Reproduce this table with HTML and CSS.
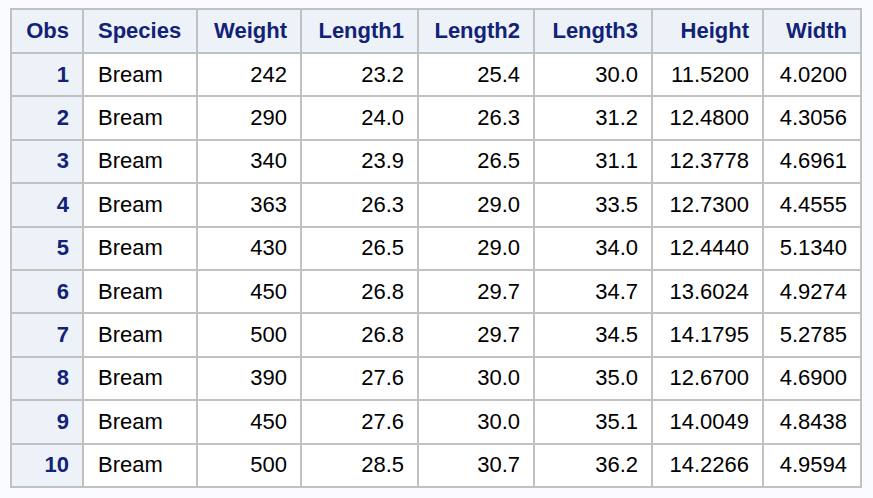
FILE: index.html
```html
<!DOCTYPE html>
<html>
<head>
<meta charset="utf-8">
<link rel="stylesheet" href="styles.css">
</head>
<body>
<table class="tbl">
<colgroup>
<col class="c-obs"><col class="c-sp"><col class="c-w"><col class="c-l1"><col class="c-l2"><col class="c-l3"><col class="c-h"><col class="c-wd">
</colgroup>
<thead>
<tr><th>Obs</th><th class="left">Species</th><th>Weight</th><th>Length1</th><th>Length2</th><th>Length3</th><th>Height</th><th>Width</th></tr>
</thead>
<tbody>
<tr><th>1</th><td class="left">Bream</td><td>242</td><td>23.2</td><td>25.4</td><td>30.0</td><td>11.5200</td><td>4.0200</td></tr>
<tr><th>2</th><td class="left">Bream</td><td>290</td><td>24.0</td><td>26.3</td><td>31.2</td><td>12.4800</td><td>4.3056</td></tr>
<tr><th>3</th><td class="left">Bream</td><td>340</td><td>23.9</td><td>26.5</td><td>31.1</td><td>12.3778</td><td>4.6961</td></tr>
<tr><th>4</th><td class="left">Bream</td><td>363</td><td>26.3</td><td>29.0</td><td>33.5</td><td>12.7300</td><td>4.4555</td></tr>
<tr><th>5</th><td class="left">Bream</td><td>430</td><td>26.5</td><td>29.0</td><td>34.0</td><td>12.4440</td><td>5.1340</td></tr>
<tr><th>6</th><td class="left">Bream</td><td>450</td><td>26.8</td><td>29.7</td><td>34.7</td><td>13.6024</td><td>4.9274</td></tr>
<tr><th>7</th><td class="left">Bream</td><td>500</td><td>26.8</td><td>29.7</td><td>34.5</td><td>14.1795</td><td>5.2785</td></tr>
<tr><th>8</th><td class="left">Bream</td><td>390</td><td>27.6</td><td>30.0</td><td>35.0</td><td>12.6700</td><td>4.6900</td></tr>
<tr><th>9</th><td class="left">Bream</td><td>450</td><td>27.6</td><td>30.0</td><td>35.1</td><td>14.0049</td><td>4.8438</td></tr>
<tr><th>10</th><td class="left">Bream</td><td>500</td><td>28.5</td><td>30.7</td><td>36.2</td><td>14.2266</td><td>4.9594</td></tr>
</tbody>
</table>
</body>
</html>
```
FILE: styles.css
```css
html, body {
  margin: 0;
  background: #fafbfe;
}
body {
  padding: 8px 0 0 10px;
}
.tbl {
  border-collapse: collapse;
  table-layout: fixed;
  width: 850px;
  font-family: "Liberation Sans", Arial, sans-serif;
  font-size: 22px;
  color: #000;
  background: #fff;
}
.c-obs { width: 72px; }
.c-sp { width: 114px; }
.c-w { width: 104px; }
.c-l1 { width: 117px; }
.c-l2 { width: 116px; }
.c-l3 { width: 118px; }
.c-h { width: 111px; }
.c-wd { width: 98px; }
.tbl th, .tbl td {
  border: 2px solid #c1c1c1;
  padding: 0 13px 0 14px;
  text-align: right;
  height: 41.4px;
  white-space: nowrap;
}
.tbl th {
  background: #edf2f9;
  color: #112277;
  font-weight: bold;
}
.tbl thead th {
  height: 42px;
}
.tbl .left {
  text-align: left;
}
```
